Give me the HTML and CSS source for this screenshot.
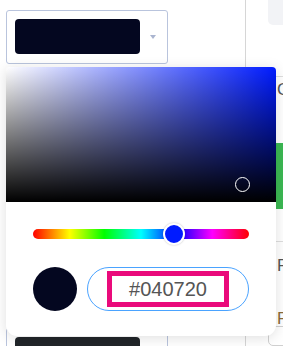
FILE: index.html
```html
<!DOCTYPE html>
<html>
<head>
<meta charset="utf-8">
<link rel="stylesheet" href="styles.css">
</head>
<body>
<div class="page">
  <div class="left">
    <div class="select">
      <div class="swatch"></div>
      <span class="arrow"></span>
    </div>
    <div class="select second">
      <div class="swatch dark"></div>
      <span class="arrow"></span>
    </div>
  </div>
  <div class="right">
    <div class="graybox"></div>
    <div class="section first">
      <div class="label">Co</div>
      <div class="green"></div>
    </div>
    <div class="section">
      <div class="label lower">Fo</div>
      <div class="label fill">Fi</div>
      <div class="inputbox"></div>
    </div>
  </div>

  <div class="popover">
    <div class="saturation">
      <span class="sat-cursor"></span>
    </div>
    <div class="controls">
      <div class="hue">
        <span class="hue-thumb"></span>
      </div>
      <div class="value-row">
        <div class="preview"></div>
        <div class="pill">
          <div class="hex">#040720</div>
        </div>
      </div>
    </div>
  </div>
</div>
</body>
</html>
```
FILE: styles.css
```css
* { box-sizing: border-box; }
html, body { margin: 0; padding: 0; background: #fff; }
body { font-family: "Liberation Sans", Arial, sans-serif; width: 283px; height: 346px; overflow: hidden; }

.page { position: relative; display: flex; height: 346px; }

.left {
  width: 246px;
  flex: none;
  border-right: 1px solid #d6d6d6;
  padding: 10px 0 0 6px;
  display: flex;
  flex-direction: column;
}

.select {
  width: 162px;
  height: 54px;
  border: 1px solid #b9c4dd;
  border-radius: 3px;
  padding: 8px 0 0 8px;
  display: flex;
  align-items: flex-start;
  flex: none;
}
.select.second { margin-top: 264px; }
.swatch {
  width: 125px;
  height: 35px;
  background: #040720;
  border-radius: 4px;
}
.swatch.dark { background: #212529; }
.arrow {
  margin: 16px 0 0 10px;
  width: 0; height: 0;
  border-left: 3px solid transparent;
  border-right: 3px solid transparent;
  border-top: 4px solid #aab5d0;
}

.right {
  flex: 1;
  padding: 0 0 0 22px;
  display: flex;
  flex-direction: column;
}
.graybox {
  height: 26px;
  background: #f2f3f6;
  border-radius: 0 0 0 5px;
  margin-right: -20px;
}
.section {
  border-top: 1px solid #dedede;
  margin-left: -22px;
  padding-left: 31px;
}
.section.first { margin-top: 51px; height: 175px; }
.label {
  font-size: 17px;
  color: #555;
  white-space: nowrap;
  padding-top: 3px;
  line-height: 20px;
}
.label.lower { padding-top: 14px; }
.green {
  margin-top: 43px;
  margin-left: -2px;
  height: 66px;
  background: #3cb853;
}
.fill { padding-top: 33px; color: #8a6a3a; }
.inputbox {
  margin-top: -3px;
  margin-left: -9px;
  height: 20px;
  border: 1px solid #d0d0d0;
  border-radius: 5px;
}

.popover {
  position: absolute;
  left: 6px;
  top: 67px;
  width: 270px;
  height: 269px;
  background: #fff;
  border-radius: 4px 4px 11px 11px;
  box-shadow: 0 2px 14px rgba(0, 0, 0, 0.13);
  display: flex;
  flex-direction: column;
}
.saturation {
  position: relative;
  height: 135px;
  border-radius: 4px 4px 0 0;
  background:
    linear-gradient(to top, #000, rgba(0,0,0,0)),
    linear-gradient(to right, #fff, rgba(255,255,255,0)),
    #001bff;
}
.sat-cursor {
  position: absolute;
  left: 229px;
  top: 110px;
  width: 15px;
  height: 15px;
  border: 1.5px solid #fff;
  border-radius: 50%;
}
.controls {
  padding: 27px 27px 0 27px;
  display: flex;
  flex-direction: column;
  gap: 28px;
}
.hue {
  position: relative;
  height: 10px;
  border-radius: 5px;
  background: linear-gradient(to right, #f00 0%, #ff0 17%, #0f0 33%, #0ff 50%, #00f 67%, #f0f 83%, #f00 100%);
}
.hue-thumb {
  position: absolute;
  left: 130px;
  top: -6px;
  width: 22px;
  height: 22px;
  border-radius: 50%;
  background: #001bff;
  border: 2px solid #fff;
  box-shadow: 0 0 2px rgba(0,0,0,0.25);
}
.value-row {
  display: flex;
  gap: 10px;
  align-items: center;
}
.preview {
  width: 44px;
  height: 44px;
  border-radius: 50%;
  background: #040720;
  flex: none;
}
.pill {
  width: 162px;
  height: 44px;
  border: 1px solid #4aa3ff;
  border-radius: 22px;
  display: flex;
  align-items: center;
  justify-content: center;
}
.hex {
  width: 122px;
  height: 36px;
  border: 5px solid #ea0a7b;
  display: flex;
  align-items: center;
  justify-content: center;
  font-size: 20px;
  color: #555;
}
```
